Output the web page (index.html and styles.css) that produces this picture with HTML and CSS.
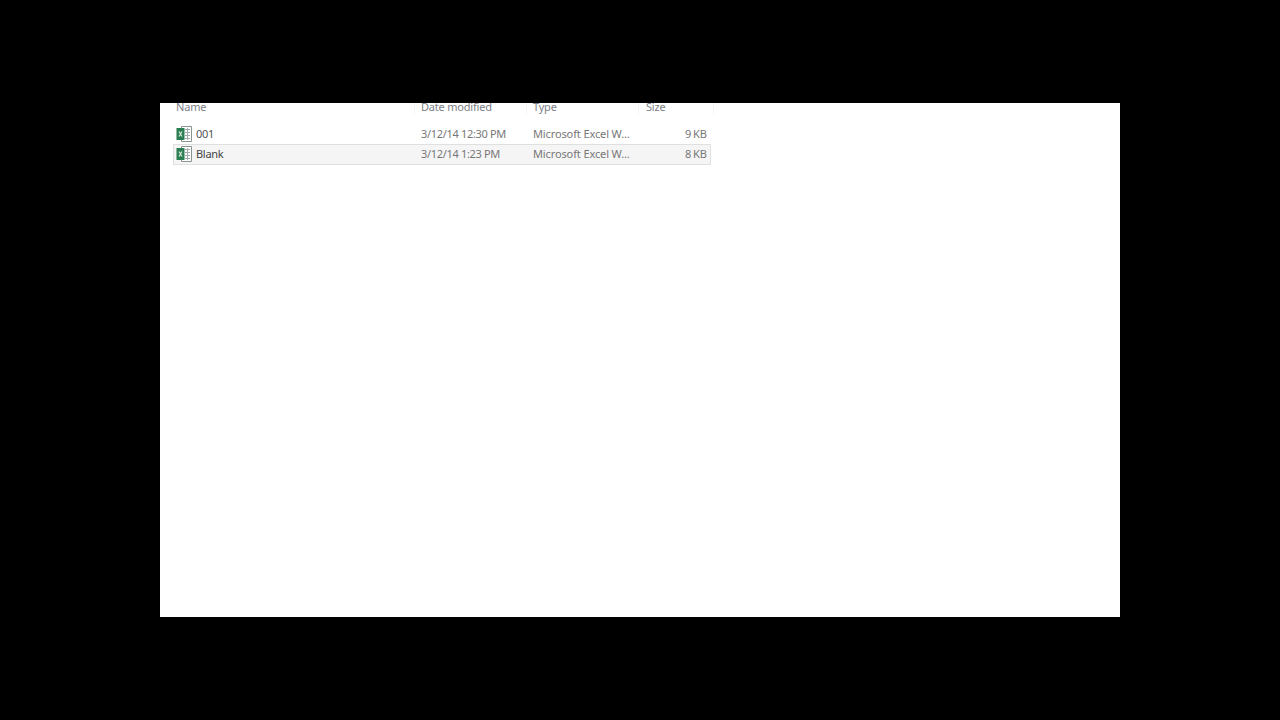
FILE: index.html
```html
<!DOCTYPE html>
<html>
    <head>
        <meta charset="utf-8" />
        <title>Explorer</title>
        <link rel="stylesheet" href="styles.css">
    </head>
    <body>
        <div class="window">
            <div class="header">
                <div class="col-name">Name</div>
                <div class="col-date">Date modified</div>
                <div class="col-type">Type</div>
                <div class="col-size">Size</div>
            </div>
            <div class="files">
                <div class="row">
                    <div class="col-name">
                        <svg class="icon" viewBox="0 0 16 16" width="16" height="16">
                            <path d="M5.5 .5H15.5V15.5H5.5Z" fill="#fff" stroke="#8b9590"/>
                            <path d="M9 3.5H14M9 6.5H14M9 9.5H14M9 12.5H14M11.5 2V14" stroke="#a5acad" fill="none"/>
                            <rect x="0.5" y="2" width="8" height="12" fill="#2b7d52"/>
                            <path d="M3 5.5L6 10.5M6 5.5L3 10.5" stroke="#d5e8dc" stroke-width="1.2" fill="none"/>
                        </svg>
                        <span>001</span>
                    </div>
                    <div class="col-date">3/12/14 12:30 PM</div>
                    <div class="col-type">Microsoft Excel W...</div>
                    <div class="col-size">9 KB</div>
                </div>
                <div class="row selected">
                    <div class="col-name">
                        <svg class="icon" viewBox="0 0 16 16" width="16" height="16">
                            <path d="M5.5 .5H15.5V15.5H5.5Z" fill="#fff" stroke="#8b9590"/>
                            <path d="M9 3.5H14M9 6.5H14M9 9.5H14M9 12.5H14M11.5 2V14" stroke="#a5acad" fill="none"/>
                            <rect x="0.5" y="2" width="8" height="12" fill="#2b7d52"/>
                            <path d="M3 5.5L6 10.5M6 5.5L3 10.5" stroke="#d5e8dc" stroke-width="1.2" fill="none"/>
                        </svg>
                        <span class="dark">Blank</span>
                    </div>
                    <div class="col-date">3/12/14 1:23 PM</div>
                    <div class="col-type">Microsoft Excel W...</div>
                    <div class="col-size">8 KB</div>
                </div>
            </div>
        </div>
    </body>
</html>
```
FILE: styles.css
```css
* {
    box-sizing: border-box;
}

html, body {
    height: 100%;
}

body {
    margin: 0;
    padding: 103px 160px;
    background-color: #000;
    font-family: "Noto Sans", sans-serif;
    font-size: 11px;
    color: #777;
}

.window {
    height: 514px;
    background-color: #fff;
    padding-left: 13px;
}

.header, .row {
    display: grid;
    grid-template-columns: 245px 112px 112px 69px;
    width: 538px;
}

.header {
    height: 21px;
    padding-left: 3px;
    line-height: 8px;
    color: #7d8087;
}

.header > div {
    height: 11px;
    letter-spacing: -0.2px;
    margin-right: 6px;
    border-right: 1px solid #f5f5f5;
}

.row {
    height: 20px;
    line-height: 18px;
    padding-left: 3px;
    border: 1px solid transparent;
    border-left: 0;
    border-right: 0;
}

.selected {
    height: 21px;
    background-color: #f5f5f5;
    border: 1px solid #e0e0e0;
    padding-left: 2px;
}

.col-name {
    display: flex;
    align-items: center;
    align-self: start;
    height: 18px;
    gap: 4px;
    color: #555;
    letter-spacing: -0.3px;
}

.header .col-name {
    align-items: flex-start;
    color: #7d8087;
}

.col-date {
    letter-spacing: -0.32px;
}

.col-type {
    letter-spacing: -0.12px;
}

.col-size {
    text-align: right;
    padding-right: 7px;
    word-spacing: -1px;
}

.header .col-size {
    text-align: left;
    padding-left: 1px;
    margin-right: 0;
}

.dark {
    color: #444;
}
```
